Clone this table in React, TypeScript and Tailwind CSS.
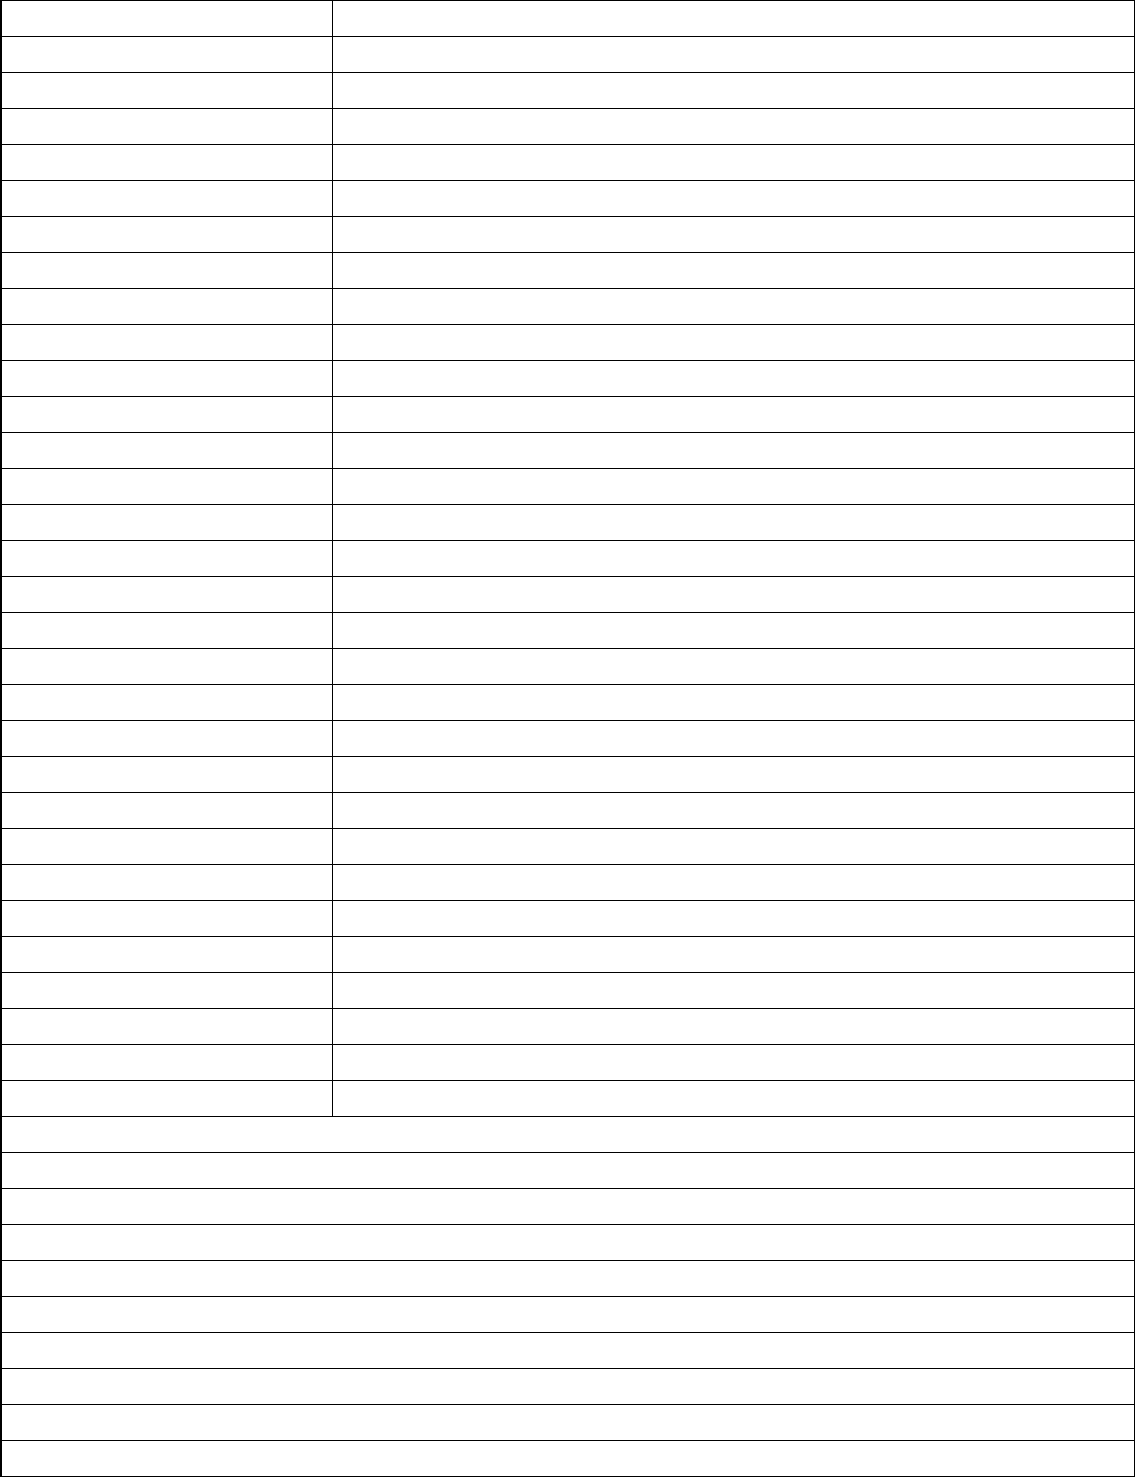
import React from 'react';

const SPLIT_ROWS = 31;
const FULL_ROWS = 10;

export default function App() {
  return (
    <div className="w-[1135px] bg-white" style={{ fontFamily: '"Liberation Sans", Arial, sans-serif' }}>
      <table className="w-full table-fixed border-collapse border-l-2 border-black">
        <colgroup>
          <col className="w-[331px]" />
          <col />
        </colgroup>
        <tbody>
          {Array.from({ length: SPLIT_ROWS }, (_, i) => (
            <tr key={`s${i}`} className="h-9">
              <td className="border border-l-2 border-black p-0" />
              <td className="border border-black p-0" />
            </tr>
          ))}
          {Array.from({ length: FULL_ROWS }, (_, i) => (
            <tr key={`f${i}`} className="h-9">
              <td colSpan={2} className="border border-l-2 border-black p-0" />
            </tr>
          ))}
        </tbody>
      </table>
    </div>
  );
}
